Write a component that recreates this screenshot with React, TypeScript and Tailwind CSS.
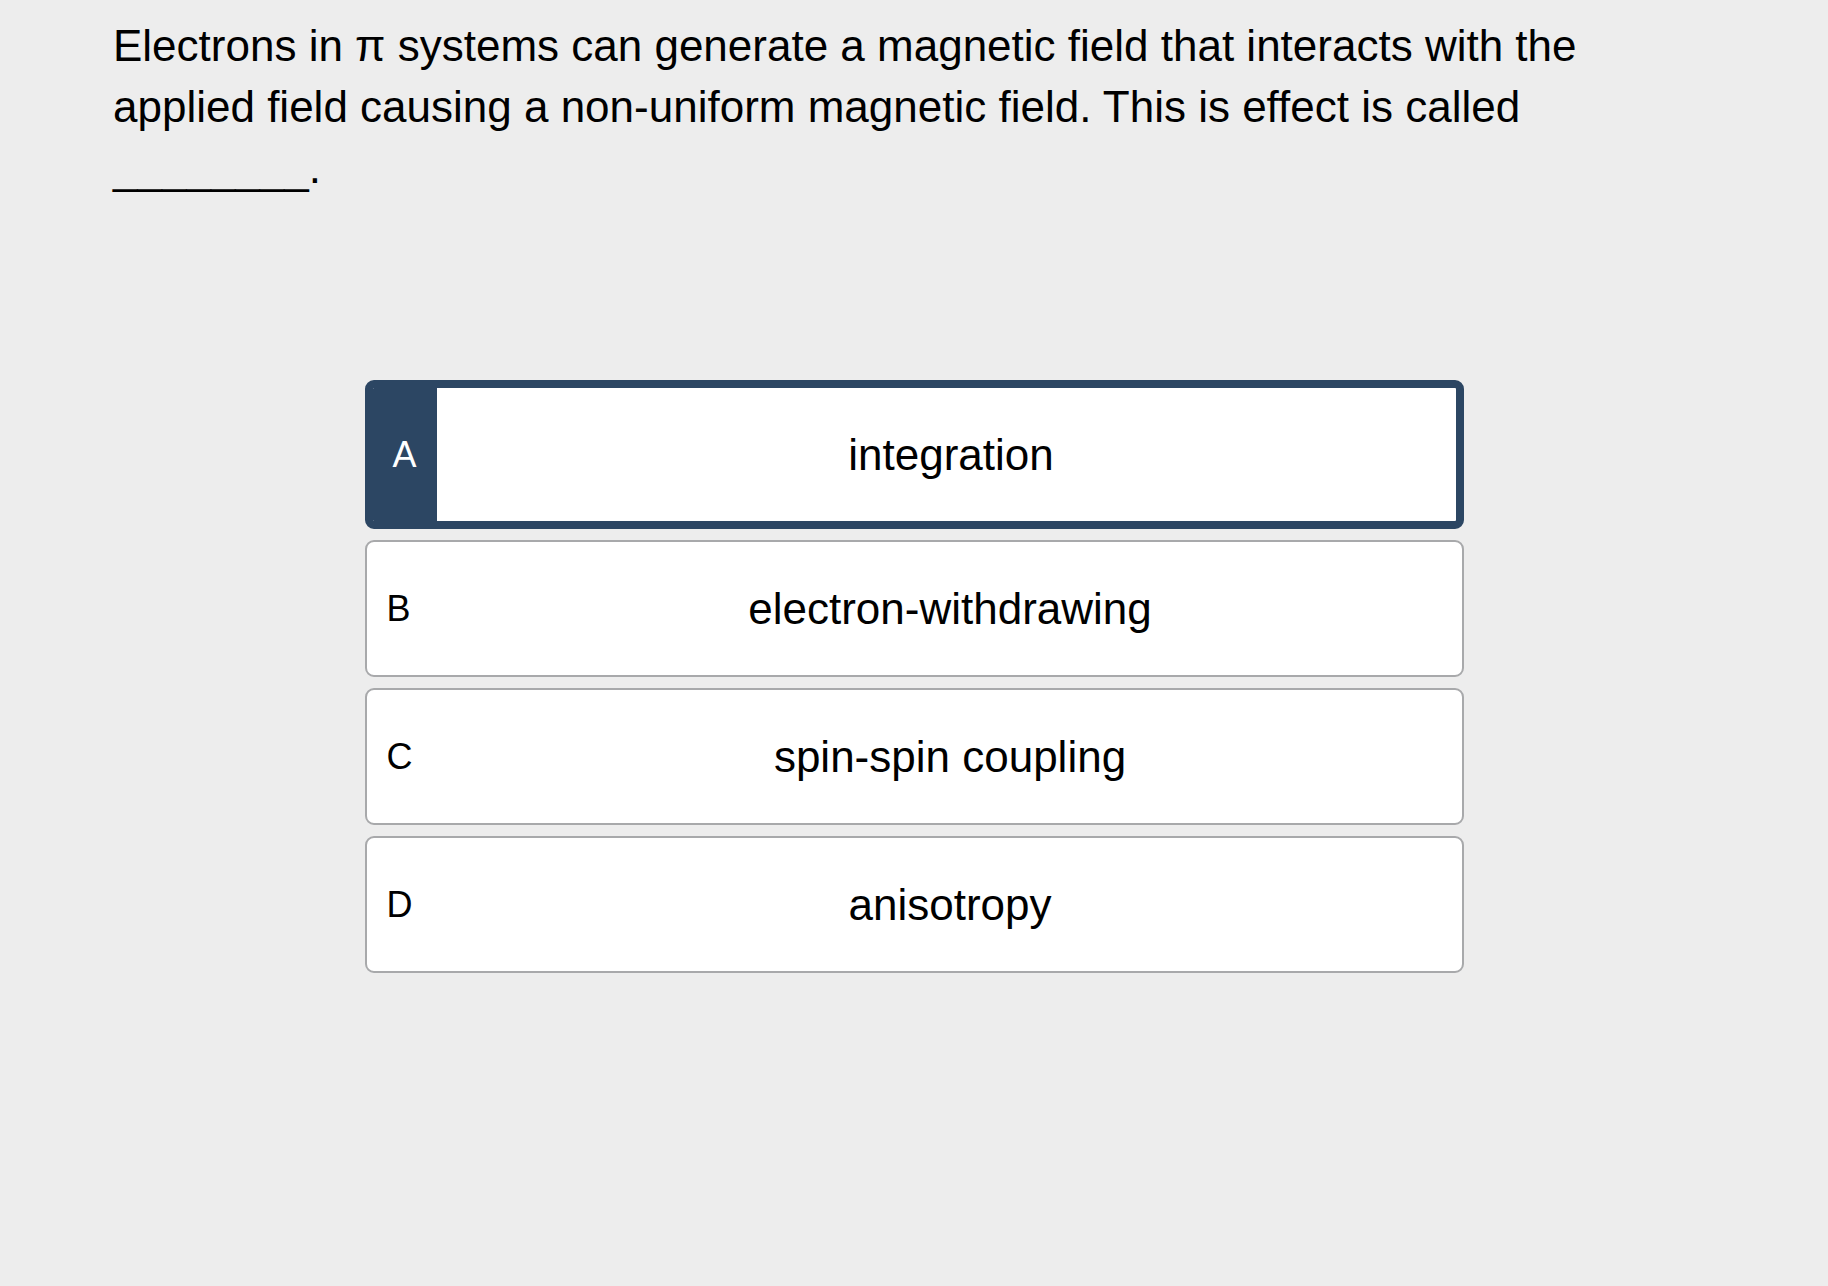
const options = [
	{ key: 'A', text: 'integration' },
	{ key: 'B', text: 'electron-withdrawing' },
	{ key: 'C', text: 'spin-spin coupling' },
	{ key: 'D', text: 'anisotropy' },
]

const selected = 'A'

function OptionRow({ label, text, active }: { label: string; text: string; active: boolean }) {
	if (active) {
		return (
			<div className="flex h-[149px] rounded-[9px] border-[8px] border-[#2c4663] bg-white overflow-hidden">
				<div className="flex w-[64px] shrink-0 items-center justify-center bg-[#2c4663] text-[36px] text-white">
					{label}
				</div>
				<div className="flex flex-1 items-center justify-center pl-[10px] text-[44px] text-black">
					{text}
				</div>
			</div>
		)
	}
	return (
		<div className="flex h-[137px] rounded-[9px] border-2 border-[#a8a9ab] bg-white">
			<div className="flex w-[70px] shrink-0 items-center pl-[20px] text-[36px] text-black">
				{label}
			</div>
			<div className="flex flex-1 items-center justify-center pl-[2px] text-[44px] text-black">
				{text}
			</div>
		</div>
	)
}

export default function App() {
	return (
		<div
			className="min-h-[1286px] w-full bg-[#ededed]"
			style={{ fontFamily: '"Liberation Sans", Arial, sans-serif' }}
		>
			<p className="max-w-[1653px] pl-[113px] pt-[15px] text-[44px] leading-[61px] text-black">
				Electrons in π systems can generate a magnetic field that interacts with the applied field causing a
				non-uniform magnetic field. This is effect is called ________.
			</p>
			<div className="mx-auto mt-[182px] flex w-[1099px] flex-col gap-[11px]">
				{options.map((o) => (
					<OptionRow key={o.key} label={o.key} text={o.text} active={o.key === selected} />
				))}
			</div>
		</div>
	)
}
